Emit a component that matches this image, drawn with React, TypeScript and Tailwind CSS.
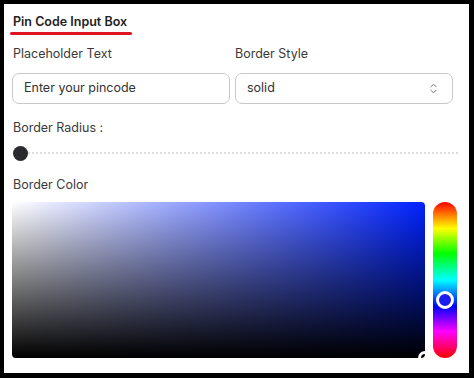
import { ChevronsUpDown } from "lucide-react"

const hueGradient =
  "linear-gradient(to bottom, #ff0000 0%, #ffff00 17%, #00ff00 33%, #00ffff 50%, #0000ff 67%, #ff00ff 83%, #ff0000 100%)"

export default function App() {
  return (
    <div
      className="h-[378px] w-[474px] bg-black pb-[5px] pl-[4px] pr-[5px] pt-[4px]"
      style={{ fontFamily: "Inter, 'Noto Sans', sans-serif" }}
    >
      <div className="flex h-full flex-col bg-white px-[8px]">
        <div className="pt-[4px]">
          <div className="ml-[-2px] inline-flex flex-col">
            <span className="pl-[3px] text-[12.5px] font-semibold leading-[18px] text-[#222]">
              Pin Code Input Box
            </span>
            <span className="mt-[1px] h-[3px] w-[122px] rounded-full bg-[#e0141e]" />
          </div>
        </div>

        <div className="mt-[10px] flex gap-[5px]">
          <div className="flex w-[218px] flex-col">
            <label className="pl-[1px] text-[12.5px] leading-[18px] text-[#3a3a3a]">
              Placeholder Text
            </label>
            <div className="mt-[10px] flex h-[31px] items-center rounded-[7px] border border-[#c9c9c9] px-[11px] text-[12.5px] text-[#333]">
              Enter your pincode
            </div>
          </div>
          <div className="flex w-[218px] flex-col">
            <label className="text-[12.5px] leading-[18px] text-[#3a3a3a]">
              Border Style
            </label>
            <div className="mt-[10px] flex h-[31px] items-center justify-between rounded-[7px] border border-[#c9c9c9] pl-[11px] pr-[12px] text-[12.5px] text-[#333]">
              <span>solid</span>
              <ChevronsUpDown size={13} strokeWidth={1.6} className="text-[#666]" />
            </div>
          </div>
        </div>

        <div className="mt-[15px] pl-[1px] text-[12.5px] leading-[18px] text-[#3a3a3a]">
          Border Radius :
        </div>
        <div className="relative mt-[8px] flex h-[16px] items-center">
          <div className="ml-[4px] h-[2px] w-[442px] border-t-2 border-dotted border-[#dcdcdc]" />
          <div className="absolute left-[1px] top-[1px] h-[15px] w-[15px] rounded-full bg-[#2a2a2e]" />
        </div>

        <div className="mt-[15px] pl-[1px] text-[12.5px] leading-[18px] text-[#3a3a3a]">
          Border Color
        </div>

        <div className="mt-[8px] flex gap-[8px]">
          <div
            className="relative h-[156px] w-[413px] rounded-[4px]"
            style={{
              background:
                "linear-gradient(to top, #000, rgba(0,0,0,0)), linear-gradient(to right, #fff, hsl(232, 100%, 50%))",
            }}
          >
            <div className="absolute bottom-[-7px] right-[-7px] h-[14px] w-[14px] rounded-full border-[3px] border-white" />
          </div>
          <div
            className="relative h-[156px] w-[24px] rounded-full"
            style={{ background: hueGradient }}
          >
            <div className="absolute left-[3px] top-[89px] h-[18px] w-[18px] rounded-full border-[3px] border-white bg-[#1c1cf0]" />
          </div>
        </div>
      </div>
    </div>
  )
}
